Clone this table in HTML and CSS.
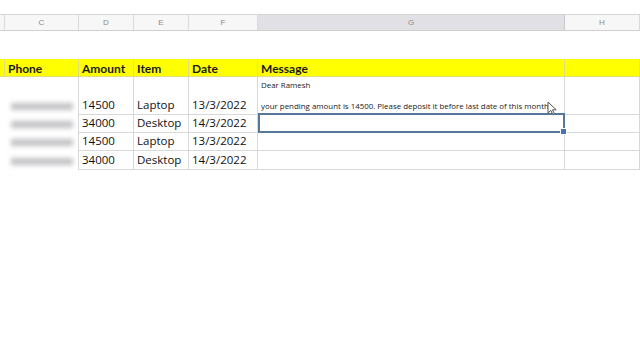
FILE: index.html
```html
<!DOCTYPE html>
<html>
<head>
<meta charset="utf-8">
<link rel="stylesheet" href="styles.css">
</head>
<body>
<div class="sheet">
  <div class="topband"></div>
  <div class="row colhdr">
    <div class="hc"></div>
    <div class="hc">C</div>
    <div class="hc">D</div>
    <div class="hc">E</div>
    <div class="hc">F</div>
    <div class="hc sel">G</div>
    <div class="hc">H</div>
  </div>
  <div class="gap"></div>
  <div class="row yellow">
    <div class="c"></div>
    <div class="c b">Phone</div>
    <div class="c b">Amount</div>
    <div class="c b">Item</div>
    <div class="c b">Date</div>
    <div class="c b">Message</div>
    <div class="c"></div>
  </div>
  <div class="row data tall">
    <div class="c nob"></div>
    <div class="c nob"><span class="blur"></span></div>
    <div class="c">14500</div>
    <div class="c">Laptop</div>
    <div class="c">13/3/2022</div>
    <div class="c msg">Dear Ramesh<br><br>your pending amount is 14500. Please deposit it before last date of this month</div>
    <div class="c"></div>
  </div>
  <div class="row data">
    <div class="c nob"></div>
    <div class="c nob"><span class="blur"></span></div>
    <div class="c">34000</div>
    <div class="c">Desktop</div>
    <div class="c">14/3/2022</div>
    <div class="c active"><span class="handle"></span></div>
    <div class="c"></div>
  </div>
  <div class="row data">
    <div class="c nob"></div>
    <div class="c nob"><span class="blur"></span></div>
    <div class="c">14500</div>
    <div class="c">Laptop</div>
    <div class="c">13/3/2022</div>
    <div class="c"></div>
    <div class="c"></div>
  </div>
  <div class="row data">
    <div class="c nob"></div>
    <div class="c nob"><span class="blur"></span></div>
    <div class="c">34000</div>
    <div class="c">Desktop</div>
    <div class="c">14/3/2022</div>
    <div class="c"></div>
    <div class="c"></div>
  </div>
  <svg class="cursor" width="11" height="15" viewBox="0 0 11 15">
    <path d="M1 1 L1 12 L3.8 9.4 L5.8 13.6 L7.4 12.9 L5.5 8.8 L9.2 8.8 Z" fill="#fff" stroke="#555" stroke-width="1" stroke-linejoin="round"/>
  </svg>
</div>
</body>
</html>
```
FILE: styles.css
```css
html, body {
  margin: 0;
  padding: 0;
  background: #fff;
}
.sheet {
  position: relative;
  width: 640px;
  height: 360px;
  overflow: hidden;
  font-family: "Open Sans", "Liberation Sans", sans-serif;
  color: #111;
}
.topband {
  height: 14px;
}
.row {
  display: grid;
  grid-template-columns: 5px 74px 55px 55px 69px 307px 75px;
}
.colhdr {
  height: 17px;
  border-top: 1px solid #d6d6d6;
  border-bottom: 1px solid #cfcfcf;
  box-sizing: border-box;
  background: #f7f7f7;
}
.hc {
  border-right: 1px solid #dadada;
  font-size: 8px;
  color: #8a8a8a;
  display: flex;
  align-items: center;
  justify-content: center;
  font-family: "Liberation Sans", sans-serif;
}
.hc.sel {
  background: #e1e1e5;
  border-right: 1px solid #c8c8c8;
}
.gap {
  height: 28px;
}
.c {
  box-sizing: border-box;
  border-right: 1px solid #d9d9d9;
  border-bottom: 1px solid #d9d9d9;
  padding: 0 0 2px 3px;
  font-size: 11.5px;
  display: flex;
  align-items: flex-end;
  white-space: nowrap;
}
.yellow {
  height: 18px;
  background: #ffff00;
}
.yellow .c {
  border-color: #e0e07a;
  padding-bottom: 0;
}
.b {
  font-family: "Lato", "Open Sans", sans-serif;
  font-weight: 700;
  font-size: 12px;
  color: #1a1a1a;
}
.data {
  height: 18.5px;
}
.data.tall {
  height: 37px;
}
.nob {
  border-right: none;
  border-bottom: none;
}
.data .c.nob + .c.nob {
  border-right: 1px solid #d9d9d9;
}
.blur {
  display: block;
  width: 62px;
  height: 7px;
  margin: 0 0 3px 3px;
  background: #c2c2c6;
  filter: blur(2.5px);
}
.msg {
  font-size: 7.9px;
  line-height: 10.5px;
  align-items: flex-start;
  padding-top: 3px;
  color: #222;
}
.active {
  position: relative;
  border: 2px solid #55779c;
  margin: -1px 0 0 0;
}
.handle {
  position: absolute;
  right: -4px;
  bottom: -4px;
  width: 5px;
  height: 5px;
  background: #4a72b0;
  border: 1px solid #fff;
}
.cursor {
  position: absolute;
  left: 547px;
  top: 101px;
}
```
